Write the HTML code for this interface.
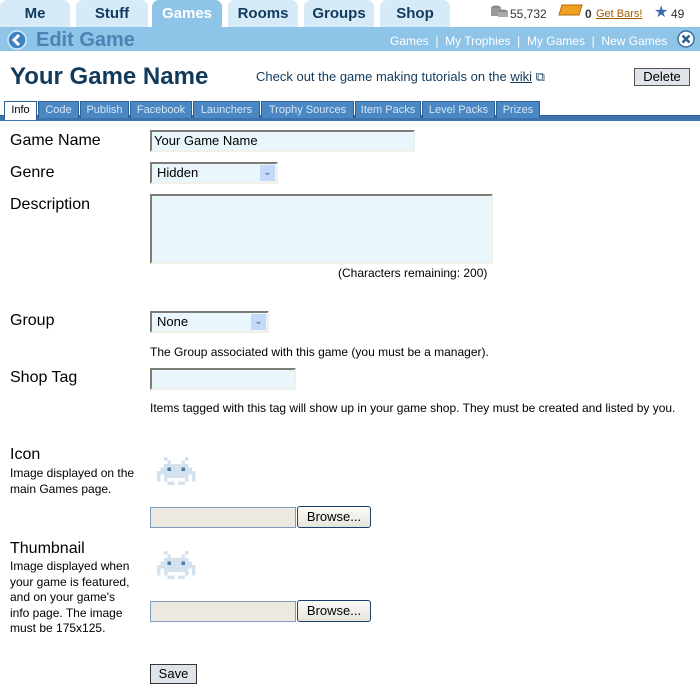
<!DOCTYPE html>
<html><head><meta charset="utf-8"><style>
body{margin:0;width:700px;height:687px;background:#fff;font-family:"Liberation Sans",sans-serif;position:relative;overflow:hidden}
.a{position:absolute}
.tab{position:absolute;top:0;height:27px;background:#d6eaf8;border-radius:7px 7px 0 0;font-weight:bold;font-size:15px;color:#123a5c;text-align:center;line-height:27px}
.lbl{position:absolute;left:10px;font-size:16px;color:#000}
.small{font-size:12px;color:#000;position:absolute}
.st{position:absolute;top:101px;height:17px;background:#4a87c3;border:1px solid #2c5f94;border-bottom:none;color:#d6e6f5;font-size:11px;white-space:nowrap;overflow:hidden;line-height:17px;text-align:center;box-sizing:border-box}
.inp{position:absolute;background:#e9f6fc;border:2px solid #7d7d78;border-right-color:#f0f0ea;border-bottom-color:#f0f0ea;box-sizing:border-box}
.btn{position:absolute;background:linear-gradient(#fbfbf8,#e6e4da);border:1px solid #1c3f6e;border-radius:3px;font-size:13px;text-align:center;box-sizing:border-box}
.file{position:absolute;background:#ece9e1;border:1px solid #7f9db9;box-sizing:border-box}
</style></head><body>
<div class="tab" style="left:0;width:70px">Me</div>
<div class="tab" style="left:76px;width:72px">Stuff</div>
<div class="tab" style="left:152px;width:70px;background:#8ec4e8;color:#fff">Games</div>
<div class="tab" style="left:228px;width:70px">Rooms</div>
<div class="tab" style="left:304px;width:70px">Groups</div>
<div class="tab" style="left:380px;width:70px">Shop</div>
<svg class="a" style="left:490px;top:5px" width="20" height="14"><ellipse cx="6" cy="3" rx="5" ry="2.5" fill="#8a8a8a"/><rect x="1" y="3" width="10" height="8" fill="#9a9a9a"/><ellipse cx="13" cy="7" rx="5" ry="2.5" fill="#888"/><rect x="8" y="7" width="10" height="5" fill="#aaa"/></svg>
<div class="a" style="left:510px;top:7px;font-size:12px;color:#333">55,732</div>
<svg class="a" style="left:558px;top:4px" width="26" height="13"><path d="M4 1H24L21 11H1Z" fill="#f0a020" stroke="#b06a00"/></svg>
<div class="a" style="left:585px;top:7px;font-size:12px;color:#333;font-weight:bold">0</div>
<div class="a" style="left:596px;top:8px;font-size:11px;color:#a05a00;text-decoration:underline">Get Bars!</div>
<div class="a" style="left:654px;top:2px;font-size:16px;color:#3a6ab0">★</div>
<div class="a" style="left:671px;top:7px;font-size:12px;color:#333">49</div>
<div class="a" style="left:0;top:27px;width:700px;height:24px;background:#8ec4e8"></div>
<svg class="a" style="left:7px;top:30px" width="20" height="20"><circle cx="10" cy="10" r="9" fill="#3f82c0" stroke="#d8ecf8" stroke-width="1.5"/><path d="M12 5L7 10L12 15" stroke="#fff" stroke-width="3" fill="none"/></svg>
<div class="a" style="left:36px;top:29px;font-size:20px;font-weight:bold;color:#4a84b4">Edit Game</div>
<div class="a" style="left:390px;top:34px;font-size:12px;color:#fff;white-space:pre">Games  |  My Trophies  |  My Games  |  New Games</div>
<svg class="a" style="left:677px;top:30px" width="18" height="18"><circle cx="9" cy="9" r="8" fill="#fff" stroke="#3f6e9c" stroke-width="1.5"/><path d="M5.5 5.5L12.5 12.5M12.5 5.5L5.5 12.5" stroke="#2c5f94" stroke-width="2.5"/></svg>
<div class="a" style="left:10px;top:63px;font-size:24px;font-weight:bold;color:#123a5c">Your Game Name</div>
<div class="a" style="left:256px;top:69px;font-size:13px;color:#123a5c">Check out the game making tutorials on the <u>wiki</u> ⧉</div>
<div class="btn" style="left:634px;top:68px;width:56px;height:18px;line-height:16px;border-color:#555;border-radius:0;background:#dfe3ea">Delete</div>
<div class="a" style="left:0;top:115px;width:700px;height:5px;background:#3d74ad;border-top:1px solid #2c5f94"></div>
<div class="st" style="left:4px;width:33px;background:#fff;color:#000;height:19px;border-color:#2c5f94">Info</div>
<div class="st" style="left:38px;width:41px">Code</div>
<div class="st" style="left:80px;width:49px">Publish</div>
<div class="st" style="left:130px;width:62px">Facebook</div>
<div class="st" style="left:193px;width:67px">Launchers</div>
<div class="st" style="left:261px;width:93px">Trophy Sources</div>
<div class="st" style="left:355px;width:66px">Item Packs</div>
<div class="st" style="left:422px;width:73px">Level Packs</div>
<div class="st" style="left:496px;width:44px">Prizes</div>
<div class="lbl" style="top:132px">Game Name</div>
<div class="inp" style="left:150px;top:130px;width:265px;height:22px;font-size:13px;line-height:18px;padding-left:2px">Your Game Name</div>
<div class="lbl" style="top:164px">Genre</div>
<div class="inp" style="left:150px;top:162px;width:128px;height:22px;font-size:13px;line-height:18px;padding-left:5px">Hidden</div>
<div class="a" style="left:260px;top:165px;width:15px;height:16px;background:#c4d8f8;font-size:10px;color:#4d6185;text-align:center;line-height:16px">⌄</div>
<div class="lbl" style="top:196px">Description</div>
<div class="inp" style="left:150px;top:194px;width:343px;height:70px"></div>
<div class="small" style="left:338px;top:266px">(Characters remaining: 200)</div>
<div class="lbl" style="top:312px">Group</div>
<div class="inp" style="left:150px;top:311px;width:119px;height:22px;font-size:13px;line-height:18px;padding-left:5px">None</div>
<div class="a" style="left:251px;top:314px;width:15px;height:16px;background:#c4d8f8;font-size:10px;color:#4d6185;text-align:center;line-height:16px">⌄</div>
<div class="small" style="left:150px;top:345px">The Group associated with this game (you must be a manager).</div>
<div class="lbl" style="top:369px">Shop Tag</div>
<div class="inp" style="left:150px;top:368px;width:146px;height:22px"></div>
<div class="small" style="left:150px;top:401px">Items tagged with this tag will show up in your game shop. They must be created and listed by you.</div>
<div class="lbl" style="top:446px">Icon</div>
<div class="small" style="left:10px;top:465px;line-height:16px">Image displayed on the<br>main Games page.</div>
<svg class="a" style="left:157px;top:457px" width="40" height="30" id="inv"><g fill="#d3e2ee"><rect x="7" y="0" width="3.5" height="3.5"/><rect x="28" y="0" width="3.5" height="3.5"/><rect x="10.5" y="3.5" width="3.5" height="3.5"/><rect x="24.5" y="3.5" width="3.5" height="3.5"/><rect x="7" y="7" width="24.5" height="3.5"/><rect x="3.5" y="10.5" width="31.5" height="3.5"/><rect x="0" y="14" width="38.5" height="3.5"/><rect x="0" y="17.5" width="3.5" height="7"/><rect x="7" y="17.5" width="24.5" height="3.5"/><rect x="35" y="17.5" width="3.5" height="7"/><rect x="7" y="21" width="3.5" height="3.5"/><rect x="28" y="21" width="3.5" height="3.5"/><rect x="10.5" y="24.5" width="7" height="3.5"/><rect x="21" y="24.5" width="7" height="3.5"/></g><rect x="10.5" y="10.5" width="3.5" height="3.5" fill="#4d7aa6"/><rect x="24.5" y="10.5" width="3.5" height="3.5" fill="#4d7aa6"/></svg>
<div class="file" style="left:150px;top:507px;width:146px;height:21px"></div>
<div class="btn" style="left:297px;top:506px;width:74px;height:22px;line-height:20px">Browse...</div>
<div class="lbl" style="top:540px">Thumbnail</div>
<div class="small" style="left:10px;top:559px;line-height:15.5px">Image displayed when<br>your game is featured,<br>and on your game's<br>info page. The image<br>must be 175x125.</div>
<svg class="a" style="left:157px;top:551px" width="40" height="30"><use href="#inv"/></svg>
<div class="file" style="left:150px;top:601px;width:146px;height:21px"></div>
<div class="btn" style="left:297px;top:600px;width:74px;height:22px;line-height:20px">Browse...</div>
<div class="btn" style="left:150px;top:664px;width:47px;height:20px;line-height:18px;border-radius:0;border-color:#333;background:#dfe3ea">Save</div>
</body></html>
